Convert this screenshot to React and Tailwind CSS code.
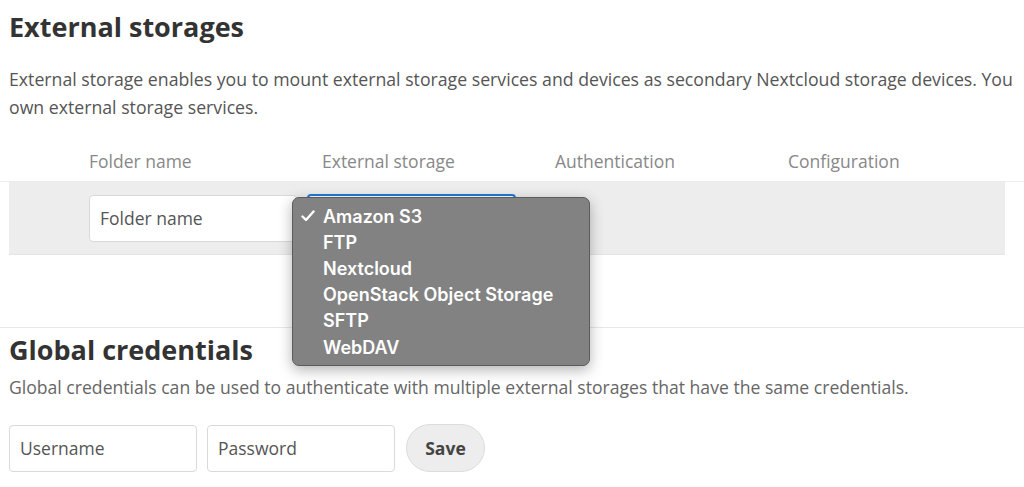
import React from "react";

export default function App() {
  const items = ["Amazon S3", "FTP", "Nextcloud", "OpenStack Object Storage", "SFTP", "WebDAV"];
  return (
    <div className="w-[1024px] h-[487px] overflow-hidden bg-white relative font-['Open_Sans',sans-serif] text-[#222]">
      <div className="pl-[9px]">
        <h2 className="text-[27px] leading-[36px] font-bold text-[#333] pt-[9px]">External storages</h2>
        <p className="mt-[20px] text-[17.7px] leading-[28px] text-[#555] whitespace-nowrap">
          External storage enables you to mount external storage services and devices as secondary Nextcloud storage devices. You
          <br />
          own external storage services.
        </p>
      </div>
      <div className="mt-[21px] flex h-[40px] items-center border-b border-[#ededed] text-[17.5px] text-[#888]">
        <div className="w-[89px]" />
        <div className="w-[233px]">Folder name</div>
        <div className="w-[233px]">External storage</div>
        <div className="w-[233px]">Authentication</div>
        <div className="w-[233px]">Configuration</div>
      </div>
      <div className="ml-[9px] w-[996px] h-[73px] bg-[#ededed] border-b border-[#e4e4e4] flex items-start pt-[13px]">
        <div className="ml-[80px] w-[208px] h-[47px] bg-white border border-[#d9d9d9] rounded-[4px] flex items-center pl-[10px] text-[17.5px] text-[#555]">
          Folder name
        </div>
        <div className="ml-[10px] mt-[-1px] w-[209px] h-[47px] bg-white border-2 border-[#1f7ad6] rounded-[4px]" />
      </div>
      <div className="h-[73px] border-b border-[#e8e8e8]" />
      <div className="pl-[9px]">
        <h2 className="text-[27px] leading-[36px] font-bold text-[#333] mt-[4px]">Global credentials</h2>
        <p className="text-[17.6px] leading-[26px] mt-[6px] text-[#666] whitespace-nowrap">
          Global credentials can be used to authenticate with multiple external storages that have the same credentials.
        </p>
        <div className="flex mt-[24px] items-center">
          <div className="w-[188px] h-[47px] border border-[#d9d9d9] rounded-[4px] flex items-center pl-[10px] text-[17.5px] text-[#555]">Username</div>
          <div className="ml-[10px] w-[188px] h-[47px] border border-[#d9d9d9] rounded-[4px] flex items-center pl-[10px] text-[17.5px] text-[#555]">Password</div>
          <button className="ml-[11px] w-[79px] h-[48px] rounded-full bg-[#ededed] border border-[#dcdcdc] text-[17.5px] font-bold text-[#444]">Save</button>
        </div>
      </div>

      <div className="absolute left-[292px] top-[197px] w-[298px] h-[169px] rounded-[7px] bg-[#828282] border border-[#5c5c5c] shadow-[0_4px_14px_rgba(0,0,0,0.3)] pt-[5px] font-['Inter',sans-serif]">
        {items.map((it, i) => (
          <div key={it} className="flex items-center h-[26.2px] text-[18px] font-semibold text-white">
            <span className="w-[30px] pl-[8px] flex items-center">
              {i === 0 && (
                <svg width="14" height="12" viewBox="0 0 14 12">
                  <path d="M1.5 6.5 L5 10 L12.5 1.5" fill="none" stroke="white" strokeWidth="2.4" strokeLinecap="round" strokeLinejoin="round" />
                </svg>
              )}
            </span>
            {it}
          </div>
        ))}
      </div>
    </div>
  );
}
